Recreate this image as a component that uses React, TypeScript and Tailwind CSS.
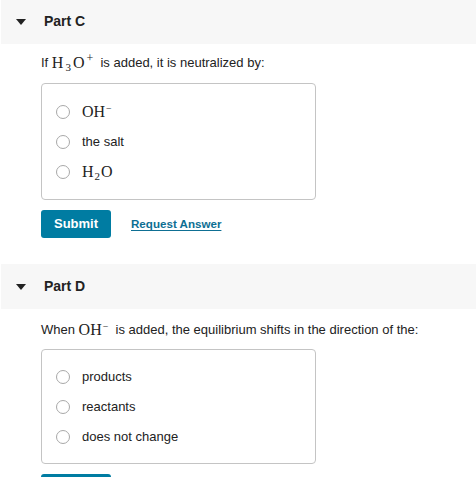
import React from "react";

type Option = { key: string; label: React.ReactNode };

const Math = ({ children }: { children: React.ReactNode }) => (
  <span className="font-['Liberation_Serif',serif] text-[16px] text-[#222]">{children}</span>
);

const partC: Option[] = [
  {
    key: "oh",
    label: (
      <Math>
        OH<sup className="ml-[1px] text-[10px]">−</sup>
      </Math>
    ),
  },
  { key: "salt", label: "the salt" },
  {
    key: "h2o",
    label: (
      <Math>
        H<sub className="mx-[1px] text-[11px]">2</sub>O
      </Math>
    ),
  },
];

const partD: Option[] = [
  { key: "products", label: "products" },
  { key: "reactants", label: "reactants" },
  { key: "nochange", label: "does not change" },
];

const PartHeader = ({ title }: { title: string }) => (
  <div className="ml-[1px] flex h-[45px] items-center bg-[#f7f7f7]">
    <div className="flex w-[43px] justify-center pr-[4px]">
      <span className="h-0 w-0 border-x-[5px] border-t-[6px] border-x-transparent border-t-[#222]" />
    </div>
    <span className="text-[14px] font-bold text-[#222]">{title}</span>
  </div>
);

const Choices = ({ options, name, pad }: { options: Option[]; name: string; pad: string }) => (
  <div className={`w-[275px] rounded-[4px] border border-[#c4c4c4] ${pad}`}>
    {options.map((o) => (
      <label key={o.key} className="flex h-[30px] items-center">
        <span className="ml-[14px] mr-[12px] h-[14px] w-[14px] rounded-full border border-[#a8a8a8] bg-white" />
        <input type="radio" name={name} className="hidden" />
        <span className="text-[13px] text-[#222]">{o.label}</span>
      </label>
    ))}
  </div>
);

const Actions = () => (
  <div className="mt-[10px] flex items-center gap-[20px]">
    <button className="h-[28px] w-[70px] rounded-[3px] bg-[#007ca2] text-[13px] font-bold text-white">
      Submit
    </button>
    <a className="text-[11.6px] font-bold text-[#0e6f93] underline underline-offset-2">
      Request Answer
    </a>
  </div>
);

export default function App() {
  return (
    <div className="h-[477px] w-[476px] overflow-hidden bg-white font-['Liberation_Sans',Arial,sans-serif]">
      <div className="-mt-[1px]">
        <PartHeader title="Part C" />
      </div>
      <div className="pl-[41px]">
        <p className="mt-[9px] flex h-[20px] items-center text-[13px] text-[#222]">
          If&nbsp;
          <Math>
            H<sub className="mx-[2px] text-[11px]">3</sub>O
            <sup className="ml-[2px] text-[12px]">+</sup>
          </Math>
          &nbsp;&nbsp;is added, it is neutralized by:
        </p>
        <div className="mt-[10px]">
          <Choices options={partC} name="c" pad="pt-[13px] pb-[12px]" />
        </div>
        <Actions />
      </div>

      <div className="mt-[26px]">
        <PartHeader title="Part D" />
      </div>
      <div className="pl-[41px]">
        <p className="mt-[11px] flex h-[20px] items-center text-[13px] text-[#222]">
          When&nbsp;
          <Math>
            OH<sup className="ml-[1px] text-[10px]">−</sup>
          </Math>
          &nbsp;&nbsp;is added, the equilibrium shifts in the direction of the:
        </p>
        <div className="mt-[9px]">
          <Choices options={partD} name="d" pad="pt-[12px] pb-[11px]" />
        </div>
        <Actions />
      </div>
    </div>
  );
}
